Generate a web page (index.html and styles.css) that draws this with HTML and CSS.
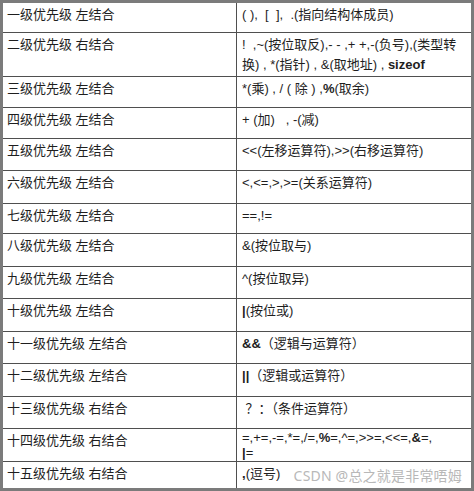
FILE: index.html
```html
<!DOCTYPE html>
<html lang="zh">
<head>
<meta charset="utf-8">
<title>运算符优先级</title>
<link rel="stylesheet" href="styles.css">
</head>
<body>
<div class="sheet">
  <div class="grid">
    <div class="cell left">一级优先级 左结合</div>
    <div class="cell right">( ),&nbsp; [&nbsp; ],&nbsp; .(指向结构体成员)</div>
    <div class="cell left">二级优先级 右结合</div>
    <div class="cell right two">!&nbsp; ,~(按位取反),- - ,+ +,-(负号),(类型转<br>换) , *(指针) , &amp;(取地址) , <b>sizeof</b></div>
    <div class="cell left">三级优先级 左结合</div>
    <div class="cell right">*(乘) , / ( 除 ) ,<b>%</b>(取余)</div>
    <div class="cell left">四级优先级 左结合</div>
    <div class="cell right">+ (加)&nbsp;&nbsp; , -(减)</div>
    <div class="cell left">五级优先级 左结合</div>
    <div class="cell right">&lt;&lt;(左移运算符),&gt;&gt;(右移运算符)</div>
    <div class="cell left">六级优先级 左结合</div>
    <div class="cell right">&lt;,&lt;=,&gt;,&gt;=(关系运算符)</div>
    <div class="cell left">七级优先级 左结合</div>
    <div class="cell right">==,!=</div>
    <div class="cell left">八级优先级 左结合</div>
    <div class="cell right">&amp;(按位取与)</div>
    <div class="cell left">九级优先级 左结合</div>
    <div class="cell right">^(按位取异)</div>
    <div class="cell left">十级优先级 左结合</div>
    <div class="cell right"><b>|</b>(按位或)</div>
    <div class="cell left">十一级优先级 左结合</div>
    <div class="cell right"><b>&amp;&amp;</b>（逻辑与运算符）</div>
    <div class="cell left">十二级优先级 左结合</div>
    <div class="cell right"><b>||</b>（逻辑或运算符）</div>
    <div class="cell left">十三级优先级 右结合</div>
    <div class="cell right">&nbsp;？：（条件运算符）</div>
    <div class="cell left">十四级优先级 右结合</div>
    <div class="cell right tight">=,+=,-=,*=,/=,<b>%</b>=,^=,&gt;&gt;=,&lt;&lt;=,<b>&amp;</b>=,<br><b>|</b>=</div>
    <div class="cell left">十五级优先级 右结合</div>
    <div class="cell right"><b>,</b>(逗号)</div>
  </div>
  <div class="watermark">CSDN @总之就是非常唔姆</div>
</div>
</body>
</html>
```

FILE: styles.css
```css
html, body {
  margin: 0;
  padding: 0;
  background: #ffffff;
}

.sheet {
  position: relative;
  width: 474px;
  height: 491px;
  box-sizing: border-box;
  border: 3px solid #7b7b7b;
  background: #ffffff;
}

.grid {
  display: grid;
  grid-template-columns: 233px 1fr;
  grid-template-rows: 29px 43px 30px 30px 31px 32px 29px 32px 31px 32px 31px 32px 31px 32px 26px;
  row-gap: 1px;
  column-gap: 1px;
  background: #4f4f4f;
  height: 100%;
}

.cell {
  background: #ffffff;
  color: #1e1e1e;
  font-family: "Liberation Sans", "Noto Sans CJK SC", sans-serif;
  font-size: 13px;
  line-height: 19px;
  padding-top: 2px;
  white-space: nowrap;
  overflow: hidden;
}

.left {
  padding-left: 4px;
}

.right {
  padding-left: 5px;
}

.two {
  line-height: 20px;
}

.tight {
  line-height: 15px;
  padding-top: 1px;
}

.cell b {
  font-weight: bold;
}

.watermark {
  position: absolute;
  right: 9px;
  bottom: 2px;
  font-family: "Noto Sans", "Noto Sans CJK SC", sans-serif;
  font-size: 14px;
  line-height: 20px;
  color: #b8b8b8;
  letter-spacing: 0.2px;
}
```
